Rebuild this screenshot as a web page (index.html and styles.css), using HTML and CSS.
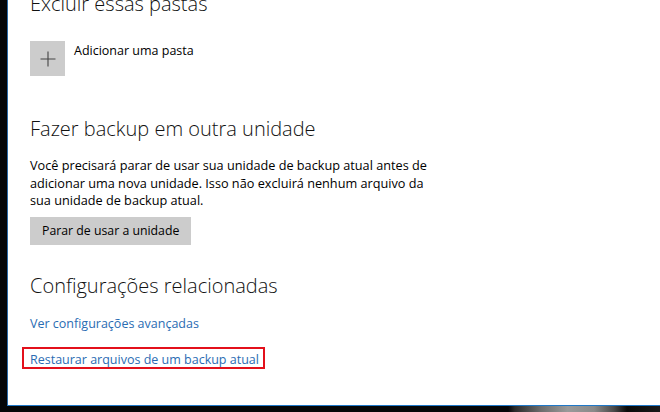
FILE: index.html
```html
<!DOCTYPE html>
<html lang="pt-BR">
<head>
<meta charset="utf-8">
<link rel="stylesheet" href="styles.css">
</head>
<body>
<div class="screen">
  <div class="window">
    <h2 class="heading heading-first">Excluir essas pastas</h2>
    <div class="add-row">
      <div class="add-box">
        <svg width="16" height="16" viewBox="0 0 16 16"><path d="M8 0.5V15.5M0.5 8H15.5" stroke="#444" stroke-width="1.1" fill="none"/></svg>
      </div>
      <span class="add-label">Adicionar uma pasta</span>
    </div>

    <h2 class="heading heading-second">Fazer backup em outra unidade</h2>
    <p class="desc">Você precisará parar de usar sua unidade de backup atual antes de adicionar uma nova unidade. Isso não excluirá nenhum arquivo da sua unidade de backup atual.</p>
    <button class="btn">Parar de usar a unidade</button>

    <h2 class="heading heading-third">Configurações relacionadas</h2>
    <a class="link link-first">Ver configurações avançadas</a>
    <div class="highlight"><a class="link">Restaurar arquivos de um backup atual</a></div>
  </div>
  <div class="taskbar"></div>
</div>
</body>
</html>
```
FILE: styles.css
```css
html, body {
  margin: 0;
  padding: 0;
  background: #050608;
}
.screen {
  width: 660px;
  height: 412px;
  overflow: hidden;
  display: flex;
  flex-direction: column;
}
.window {
  margin-left: 7px;
  height: 406px;
  box-sizing: border-box;
  background: #fff;
  border-left: 1px solid #2b6aa8;
  border-bottom: 1px solid #1f78c8;
  padding-left: 22px;
  overflow: hidden;
  font-family: "Open Sans", "Noto Sans", sans-serif;
  color: #000;
}
.heading {
  margin: 0;
  font-weight: 300;
  font-size: 20px;
  line-height: 28px;
  color: #111;
}
.heading-first { margin-top: -10px; }
.add-row {
  display: flex;
  align-items: flex-start;
  gap: 9px;
  margin-top: 23px;
}
.add-box {
  width: 35px;
  height: 35px;
  background: #cccccc;
  display: flex;
  align-items: center;
  justify-content: center;
}
.add-label {
  font-size: 12.5px;
  line-height: 20px;
  margin-top: 0;
}
.heading-second { margin-top: 39px; }
.desc {
  margin: 14px 0 0;
  font-size: 12.7px;
  line-height: 17.5px;
  width: 402px;
}
.btn {
  display: block;
  margin-top: 7px;
  height: 28px;
  padding: 0 12px;
  border: 0;
  background: #cccccc;
  font-family: inherit;
  font-size: 12.3px;
  color: #000;
}
.heading-third { margin-top: 27px; }
.link {
  color: #2a6cb3;
  font-size: 12.5px;
  line-height: 20px;
  text-decoration: none;
}
.link-first {
  display: block;
  margin-top: 14px;
}
.highlight {
  margin: 13px 0 0 -8px;
  width: 243px;
  height: 22px;
  box-sizing: border-box;
  border: 2px solid #e3101b;
  padding-left: 6px;
  line-height: 18px;
  white-space: nowrap;
}
.highlight .link { line-height: 18px; }
.taskbar {
  flex: 1;
  background: linear-gradient(90deg, #050608 0%, #050608 77%, #2a2a2a 78%, #6d6d6d 82%, #9a9a9a 86%, #8a8a8a 90%, #4a4a4a 93%, #0a0a0a 95%, #1a1a1a 100%);
}
```
